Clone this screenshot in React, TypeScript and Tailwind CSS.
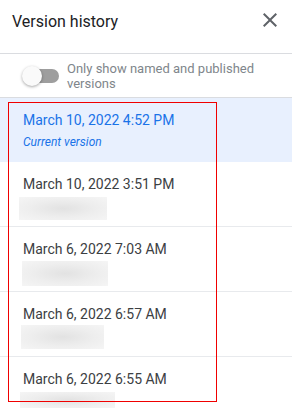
import React from "react"

type Version = {
  label: string
  current?: boolean
  blur?: { ml: string; mt: string; w: string; h: string }
}

const versions: Version[] = [
  { label: "March 10, 2022 4:52 PM", current: true },
  {
    label: "March 10, 2022 3:51 PM",
    blur: { ml: "-ml-1", mt: "mt-[3px]", w: "w-[88px]", h: "h-[23px]" },
  },
  {
    label: "March 6, 2022 7:03 AM",
    blur: { ml: "-ml-px", mt: "mt-[2px]", w: "w-[86px]", h: "h-[25px]" },
  },
  {
    label: "March 6, 2022 6:57 AM",
    blur: { ml: "-ml-[2px]", mt: "mt-px", w: "w-[83px]", h: "h-[24px]" },
  },
  {
    label: "March 6, 2022 6:55 AM",
    blur: { ml: "-ml-[3px]", mt: "mt-[3px]", w: "w-[95px]", h: "h-[16px]" },
  },
]

const CloseIcon = () => (
  <svg width="24" height="24" viewBox="0 0 24 24" fill="#5f6368">
    <path d="M19 6.41L17.59 5 12 10.59 6.41 5 5 6.41 10.59 12 5 17.59 6.41 19 12 13.41 17.59 19 19 17.59 13.41 12z" />
  </svg>
)

const Toggle = () => (
  <div className="relative w-[37px] h-5 shrink-0">
    <div className="absolute left-[4px] top-[3px] w-[33px] h-[14px] rounded-full bg-[#9e9e9e]" />
    <div className="absolute left-0 top-0 w-5 h-5 rounded-full bg-[#fafafa] shadow-[0_1px_3px_rgba(0,0,0,0.35)]" />
  </div>
)

const VersionRow = ({ version }: { version: Version }) => {
  if (version.current) {
    return (
      <div className="h-16 bg-[#e8f0fe] pl-[23px] pt-3">
        <div className="text-[14px] leading-5 text-[#1a73e8]">
          {version.label}
        </div>
        <div className="mt-1 text-[12px] leading-4 italic text-[#1a73e8]">
          Current version
        </div>
      </div>
    )
  }
  const b = version.blur!
  return (
    <div className="h-[65px] border-b border-[#e8eaed] pl-[23px] pt-3">
      <div className="text-[14px] leading-5 text-[#3c4043]">
        {version.label}
      </div>
      {/* blurred author name */}
      <div
        className={`${b.ml} ${b.mt} ${b.w} ${b.h} bg-[radial-gradient(ellipse_at_center,#e2e2e2_0%,#eeeeee_55%,#f5f5f5_100%)]`}
      />
    </div>
  )
}

export default function App() {
  return (
    <div className="relative w-[292px] h-[418px] overflow-hidden bg-white font-[Roboto,'Liberation_Sans',sans-serif]">
      <div className="h-[54px] flex items-start justify-between border-b border-[#dadce0] pl-3 pr-[10px]">
        <div className="pt-[10px] text-[16px] leading-6 text-[#202124]">
          Version history
        </div>
        <div className="pt-2">
          <CloseIcon />
        </div>
      </div>

      <div className="h-[44px] flex items-center gap-2 border-b border-[#dadce0] pl-[22px]">
        <Toggle />
        <div className="text-[13px] leading-[15px] text-[#80868b]">
          Only show named and published versions
        </div>
      </div>

      <div>
        {versions.map((v) => (
          <VersionRow key={v.label} version={v} />
        ))}
      </div>

      {/* red annotation box */}
      <div className="absolute left-2 top-[102px] w-[209px] h-[300px] border-[1.5px] border-[#f00000] pointer-events-none" />
    </div>
  )
}
